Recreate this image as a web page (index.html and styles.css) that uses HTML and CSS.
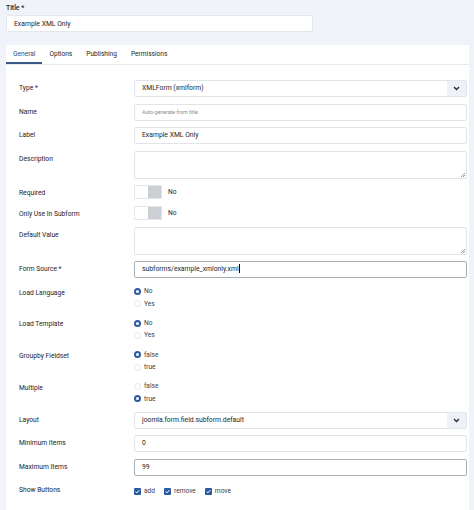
FILE: index.html
```html
<!DOCTYPE html>
<html lang="en">
<head>
  <meta charset="UTF-8" />
  <title>Edit Field</title>
  <link rel="stylesheet" href="styles.css">
</head>
<body>

  <div class="title-block">
    <label class="title-label">Title *</label>
    <input class="title-input" type="text" value="Example XML Only">
  </div>

  <div class="tabset">
    <div class="tab-bar">
      <span class="tab active">General</span>
      <span class="tab">Options</span>
      <span class="tab">Publishing</span>
      <span class="tab">Permissions</span>
    </div>

    <div class="tab-body">
      <div class="row">
        <label class="lbl">Type *</label>
        <div class="select">
          <span>XMLForm (xmlform)</span>
          <span class="chev"><svg width="7" height="5" viewBox="0 0 7 5"><path d="M1 1l2.5 2.5L6 1" fill="none" stroke="#1f2a3a" stroke-width="1.3"/></svg></span>
        </div>
      </div>

      <div class="row">
        <label class="lbl">Name</label>
        <div class="field placeholder">Auto-generate from title</div>
      </div>

      <div class="row">
        <label class="lbl">Label</label>
        <div class="field">Example XML Only</div>
      </div>

      <div class="row">
        <label class="lbl">Description</label>
        <div class="field area"><span class="grip"></span></div>
      </div>

      <div class="row">
        <label class="lbl">Required</label>
        <div class="switch-wrap"><span class="switch"><span class="knob"></span></span><span>No</span></div>
      </div>

      <div class="row">
        <label class="lbl">Only Use In Subform</label>
        <div class="switch-wrap"><span class="switch"><span class="knob"></span></span><span>No</span></div>
      </div>

      <div class="row">
        <label class="lbl">Default Value</label>
        <div class="field area"><span class="grip"></span></div>
      </div>

      <div class="row">
        <label class="lbl">Form Source *</label>
        <div class="field dark">subforms/example_xmlonly.xml<span class="caret"></span></div>
      </div>

      <div class="row">
        <label class="lbl">Load Language</label>
        <div class="radios">
          <div class="opt"><span class="radio on"></span>No</div>
          <div class="opt"><span class="radio"></span>Yes</div>
        </div>
      </div>

      <div class="row">
        <label class="lbl">Load Template</label>
        <div class="radios">
          <div class="opt"><span class="radio on"></span>No</div>
          <div class="opt"><span class="radio"></span>Yes</div>
        </div>
      </div>

      <div class="row">
        <label class="lbl">Groupby Fieldset</label>
        <div class="radios">
          <div class="opt"><span class="radio on"></span>false</div>
          <div class="opt"><span class="radio"></span>true</div>
        </div>
      </div>

      <div class="row">
        <label class="lbl">Multiple</label>
        <div class="radios">
          <div class="opt"><span class="radio"></span>false</div>
          <div class="opt"><span class="radio on"></span>true</div>
        </div>
      </div>

      <div class="row">
        <label class="lbl">Layout</label>
        <div class="select">
          <span>joomla.form.field.subform.default</span>
          <span class="chev"><svg width="7" height="5" viewBox="0 0 7 5"><path d="M1 1l2.5 2.5L6 1" fill="none" stroke="#1f2a3a" stroke-width="1.3"/></svg></span>
        </div>
      </div>

      <div class="row">
        <label class="lbl">Minimum Items</label>
        <div class="field">0</div>
      </div>

      <div class="row">
        <label class="lbl">Maximum Items</label>
        <div class="field dark">99</div>
      </div>

      <div class="row">
        <label class="lbl">Show Buttons</label>
        <div class="checks">
          <span class="check"><span class="box"><svg width="7" height="7" viewBox="0 0 7 7"><path d="M1.6 3.6l1.3 1.3 2.5-2.8" fill="none" stroke="#fff" stroke-width="1"/></svg></span>add</span>
          <span class="check"><span class="box"><svg width="7" height="7" viewBox="0 0 7 7"><path d="M1.6 3.6l1.3 1.3 2.5-2.8" fill="none" stroke="#fff" stroke-width="1"/></svg></span>remove</span>
          <span class="check"><span class="box"><svg width="7" height="7" viewBox="0 0 7 7"><path d="M1.6 3.6l1.3 1.3 2.5-2.8" fill="none" stroke="#fff" stroke-width="1"/></svg></span>move</span>
        </div>
      </div>
    </div>
  </div>

</body>
</html>
```

FILE: styles.css
```css
body {
  margin: 0;
  padding: 0;
  font-family: Roboto, "Noto Sans", sans-serif;
  font-size: 6.8px;
  color: #22262a;
  background: #f0f4fa;
  overflow: hidden;
}

.title-block {
  padding: 4px 161px 0 6px;
}

.title-label {
  display: block;
  font-size: 6.8px;
  font-weight: 500;
  line-height: 9px;
  margin-bottom: 2px;
}

.title-input {
  display: block;
  box-sizing: border-box;
  width: 307px;
  height: 17px;
  margin: 0;
  padding: 0 7px;
  border: 1px solid #e3e7ec;
  border-radius: 2px;
  background: #fff;
  font-family: inherit;
  font-size: 6.8px;
  color: #22262a;
}

.tabset {
  margin: 13px 5px 0 6px;
  background: #fff;
}

.tab-bar {
  display: flex;
  height: 19px;
  border-bottom: 1px solid #e6e9ee;
}

.tab {
  padding: 0 7px;
  line-height: 19px;
  font-size: 6.6px;
  color: #22262a;
}

.tab.active {
  color: #2a4f7f;
  box-shadow: inset 0 -2px 0 #3a5a86;
}

.tab-body {
  padding: 15px 2px 20px 13px;
}

.row {
  display: flex;
  align-items: flex-start;
  margin-bottom: 6.6px;
}

.lbl {
  width: 115px;
  flex: none;
  padding-top: 3px;
  line-height: 10px;
  font-size: 6.7px;
  color: #1e232a;
}

.field,
.select {
  flex: 1;
  box-sizing: border-box;
  height: 17px;
  padding: 0 7px;
  border: 1px solid #e1e5ea;
  border-radius: 2px;
  line-height: 15px;
  font-size: 6.8px;
  position: relative;
}

.field.dark {
  border-color: #a9afb7;
}

.field.placeholder {
  font-size: 5.3px;
  color: #8a8f96;
}

.field.area {
  height: 28px;
}

.grip {
  position: absolute;
  right: 1px;
  bottom: 1px;
  width: 4px;
  height: 4px;
  background: linear-gradient(135deg, transparent 50%, #999 50%, #999 60%, transparent 60%, transparent 75%, #999 75%, #999 85%, transparent 85%);
}

.caret {
  display: inline-block;
  width: 1px;
  height: 9px;
  background: #000;
  vertical-align: -1.5px;
}

.select {
  display: flex;
  justify-content: space-between;
  padding-right: 0;
}

.chev {
  width: 19px;
  display: flex;
  align-items: center;
  justify-content: center;
  background: #eef1f5;
}

.switch-wrap {
  display: flex;
  align-items: center;
  gap: 6px;
  height: 14px;
  font-size: 6.6px;
}

.switch {
  display: flex;
  justify-content: flex-end;
  box-sizing: border-box;
  width: 28px;
  height: 14px;
  border: 1px solid #e4e6ea;
  background: #fff;
}

.knob {
  width: 13px;
  height: 12px;
  background: #cccfd3;
}

.radios {
  padding-top: 0.5px;
}

.opt {
  display: flex;
  align-items: center;
  height: 12.3px;
  font-size: 6.6px;
  color: #3b4047;
}

.radio {
  box-sizing: border-box;
  width: 7px;
  height: 7px;
  margin-right: 3px;
  border-radius: 50%;
  border: 1px solid #e2e5e9;
  background: #fff;
}

.radio.on {
  border: 2px solid #2a5aa0;
}

.checks {
  display: flex;
  gap: 9px;
  padding-top: 5px;
  font-size: 6.6px;
  color: #3b4047;
}

.check {
  display: flex;
  align-items: center;
  gap: 3px;
}

.box {
  display: flex;
  width: 7px;
  height: 7px;
  border-radius: 1px;
  background: #2a5aa0;
}
```
